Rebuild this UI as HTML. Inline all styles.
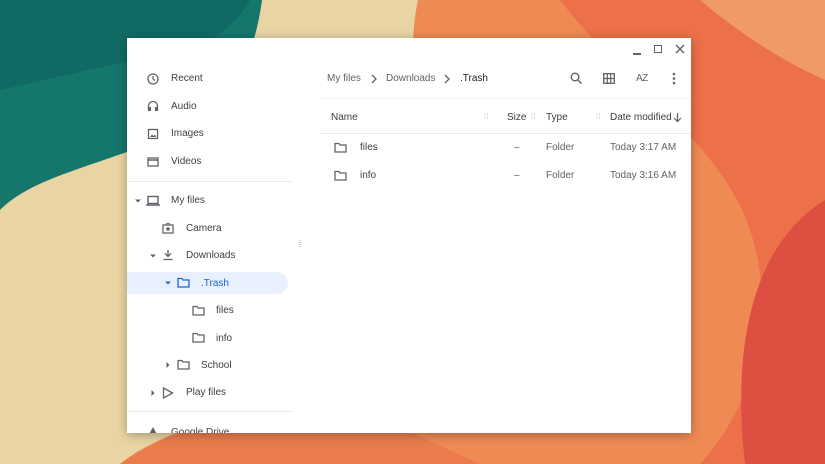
<!DOCTYPE html>
<html><head><style>
*{margin:0;padding:0;box-sizing:border-box}
body{width:825px;height:464px;overflow:hidden;position:relative;font-family:"Liberation Sans",Arial,sans-serif;background:#ef8a55}
.bg{position:absolute;left:0;top:0}
.win{position:absolute;left:127px;top:38px;width:564px;height:395px;background:#fff;box-shadow:0 2px 10px rgba(0,0,0,.3);overflow:hidden}
.t{position:absolute;font-size:10px;color:#3c4043;white-space:nowrap}
.ic{position:absolute}
.sep{position:absolute;height:1px;background:#e8eaed}
</style></head><body>
<svg class="bg" width="825" height="464">
<rect width="825" height="464" fill="#ef8a55"/>
<path d="M0 0H418C405 60 420 120 440 180C460 250 420 320 330 370C250 410 160 430 120 464H0Z" fill="#e9d4a4"/>
<path d="M0 0H262C255 50 240 100 160 140C80 170 30 180 0 210Z" fill="#15766c"/>
<path d="M0 0H250C240 20 220 35 200 45L0 90Z" fill="#106a63"/>
<path d="M120 464C170 430 250 405 330 395L480 464Z" fill="#ea7c4c"/>
<path d="M560 0H825V464H700C750 410 780 320 750 230C720 140 620 80 560 0Z" fill="#ec7048"/>
<path d="M825 200C760 240 730 330 745 464H825Z" fill="#dd4f40"/>
<path d="M700 0H825V80C780 60 735 30 700 0Z" fill="#f09a66"/>
</svg>
<div class="win">
<div class="ic" style="left:506px;top:15px;width:8px;height:1.5px;background:#5f6368"></div>
<div class="ic" style="left:527px;top:7px;width:8px;height:8px;border:1.5px solid #5f6368"></div>
<svg class="ic" style="left:548px;top:6px" width="10" height="10"><path d="M1 1L9 9M9 1L1 9" stroke="#5f6368" stroke-width="1.4"/></svg>

<svg class="ic" style="left:20px;top:35px" width="12" height="12"><circle cx="6" cy="6" r="5" fill="none" stroke="#5f6368" stroke-width="1.3"/><path d="M6 3V6L8 7.5" fill="none" stroke="#5f6368" stroke-width="1.2"/></svg>
<div class="t" style="left:44px;top:35px">Recent</div>
<svg class="ic" style="left:20px;top:62px" width="12" height="12"><path d="M1.5 10V6A4.5 4.5 0 0 1 10.5 6V10" fill="none" stroke="#5f6368" stroke-width="1.3"/><rect x="1" y="7" width="3" height="4" fill="#5f6368"/><rect x="8" y="7" width="3" height="4" fill="#5f6368"/></svg>
<div class="t" style="left:44px;top:63px">Audio</div>
<svg class="ic" style="left:20px;top:90px" width="12" height="12"><rect x="1.5" y="1.5" width="9" height="9" fill="none" stroke="#5f6368" stroke-width="1.3"/><path d="M3 9L5 6.5L6.5 8L8 6.5L9 9Z" fill="#5f6368"/></svg>
<div class="t" style="left:44px;top:90px">Images</div>
<svg class="ic" style="left:20px;top:118px" width="12" height="12"><rect x="1" y="2" width="10" height="8" fill="none" stroke="#5f6368" stroke-width="1.3"/><path d="M1 4H11" stroke="#5f6368" stroke-width="1.5"/></svg>
<div class="t" style="left:44px;top:118px">Videos</div>
<div class="sep" style="left:0;top:143px;width:165px"></div>
<svg class="ic" style="left:8px;top:160px" width="6" height="6"><path d="M0 1.5H6L3 4.5Z" fill="#5f6368"/></svg>
<svg class="ic" style="left:19px;top:157px" width="14" height="12"><rect x="2" y="1.5" width="10" height="7" fill="none" stroke="#5f6368" stroke-width="1.4"/><path d="M0 10H14" stroke="#5f6368" stroke-width="1.5"/></svg>
<div class="t" style="left:44px;top:157px">My files</div>
<svg class="ic" style="left:35px;top:184px" width="12" height="12"><rect x="1" y="3" width="10" height="8" fill="none" stroke="#5f6368" stroke-width="1.3"/><path d="M4 3L5 1.5H7L8 3" fill="none" stroke="#5f6368"/><circle cx="6" cy="7" r="1.8" fill="#5f6368"/></svg>
<div class="t" style="left:59px;top:185px">Camera</div>
<svg class="ic" style="left:23px;top:215px" width="6" height="6"><path d="M0 1.5H6L3 4.5Z" fill="#5f6368"/></svg>
<svg class="ic" style="left:35px;top:211px" width="12" height="12"><path d="M6 1V7M3 4.5L6 7.5L9 4.5M1.5 10.5H10.5" fill="none" stroke="#5f6368" stroke-width="1.3"/></svg>
<div class="t" style="left:59px;top:212px">Downloads</div>
<div class="ic" style="left:0;top:234px;width:161px;height:22px;background:#e8f0fe;border-radius:0 11px 11px 0"></div>
<svg class="ic" style="left:38px;top:242px" width="6" height="6"><path d="M0 1.5H6L3 4.5Z" fill="#1967d2"/></svg>
<svg class="ic" style="left:50px;top:239px" width="13" height="11"><path d="M1 1.5H5L6 3H12V10H1Z" fill="none" stroke="#1967d2" stroke-width="1.3"/></svg>
<div class="t" style="left:74px;top:240px;color:#1967d2">.Trash</div>
<svg class="ic" style="left:65px;top:267px" width="13" height="11"><path d="M1 1.5H5L6 3H12V10H1Z" fill="none" stroke="#5f6368" stroke-width="1.3"/></svg>
<div class="t" style="left:89px;top:267px">files</div>
<svg class="ic" style="left:65px;top:294px" width="13" height="11"><path d="M1 1.5H5L6 3H12V10H1Z" fill="none" stroke="#5f6368" stroke-width="1.3"/></svg>
<div class="t" style="left:89px;top:295px">info</div>
<svg class="ic" style="left:38px;top:324px" width="6" height="6"><path d="M1.5 0V6L4.5 3Z" fill="#5f6368"/></svg>
<svg class="ic" style="left:50px;top:321px" width="13" height="11"><path d="M1 1.5H5L6 3H12V10H1Z" fill="none" stroke="#5f6368" stroke-width="1.3"/></svg>
<div class="t" style="left:74px;top:322px">School</div>
<svg class="ic" style="left:23px;top:352px" width="6" height="6"><path d="M1.5 0V6L4.5 3Z" fill="#5f6368"/></svg>
<svg class="ic" style="left:35px;top:349px" width="12" height="12"><path d="M1.5 1L10.5 6L1.5 11Z" fill="none" stroke="#5f6368" stroke-width="1.3"/></svg>
<div class="t" style="left:59px;top:349px">Play files</div>
<div class="sep" style="left:0;top:373px;width:165px"></div>
<svg class="ic" style="left:20px;top:388px" width="12" height="12"><path d="M6 1L11 10H1Z" fill="#5f6368"/></svg>
<div class="t" style="left:44px;top:389px">Google Drive</div>
<div class="t" style="left:171px;top:201px;color:#bdc1c6;font-size:9px;letter-spacing:-1px">⁞⁞</div>

<div class="t" style="left:200px;top:35px;color:#5f6368">My files</div>
<svg class="ic" style="left:243px;top:36px" width="8" height="10"><path d="M2 1L6 5L2 9" fill="none" stroke="#5f6368" stroke-width="1.3"/></svg>
<div class="t" style="left:259px;top:35px;color:#5f6368">Downloads</div>
<svg class="ic" style="left:316px;top:36px" width="8" height="10"><path d="M2 1L6 5L2 9" fill="none" stroke="#5f6368" stroke-width="1.3"/></svg>
<div class="t" style="left:333px;top:35px;color:#202124">.Trash</div>
<svg class="ic" style="left:443px;top:34px" width="12" height="12"><circle cx="5" cy="5" r="3.8" fill="none" stroke="#5f6368" stroke-width="1.4"/><path d="M8 8L11.5 11.5" stroke="#5f6368" stroke-width="1.5"/></svg>
<svg class="ic" style="left:476px;top:35px" width="12" height="11"><rect x="0.7" y="0.7" width="10.6" height="9.6" fill="none" stroke="#5f6368" stroke-width="1.3"/><path d="M4.3 0.7V10.3M7.7 0.7V10.3M0.7 5.5H11.3" stroke="#5f6368" stroke-width="1.2"/></svg>
<div class="t" style="left:509px;top:35px;color:#5f6368;font-size:10px;letter-spacing:-0.5px">AZ</div>
<svg class="ic" style="left:545px;top:34px" width="4" height="13"><circle cx="2" cy="2" r="1.3" fill="#5f6368"/><circle cx="2" cy="6.5" r="1.3" fill="#5f6368"/><circle cx="2" cy="11" r="1.3" fill="#5f6368"/></svg>
<div class="sep" style="left:193px;top:60px;width:371px;background:#f1f3f4"></div>

<div class="t" style="left:204px;top:74px">Name</div>
<div class="t" style="left:357px;top:74px;color:#bdc1c6;font-size:8px">⁞⁞</div>
<div class="t" style="left:380px;top:74px">Size</div>
<div class="t" style="left:404px;top:74px;color:#bdc1c6;font-size:8px">⁞⁞</div>
<div class="t" style="left:419px;top:74px">Type</div>
<div class="t" style="left:469px;top:74px;color:#bdc1c6;font-size:8px">⁞⁞</div>
<div class="t" style="left:483px;top:74px">Date modified</div>
<svg class="ic" style="left:546px;top:74px" width="9" height="11"><path d="M4.5 1V9.5M1 6L4.5 9.5L8 6" fill="none" stroke="#5f6368" stroke-width="1.2"/></svg>
<div class="sep" style="left:193px;top:95px;width:371px"></div>
<svg class="ic" style="left:207px;top:104px" width="13" height="11"><path d="M1 1.5H5L6 3H12V10H1Z" fill="none" stroke="#5f6368" stroke-width="1.3"/></svg>
<div class="t" style="left:233px;top:104px">files</div>
<div class="t" style="left:387px;top:104px;color:#5f6368">–</div>
<div class="t" style="left:419px;top:104px;color:#5f6368">Folder</div>
<div class="t" style="left:483px;top:104px;color:#5f6368">Today 3:17 AM</div>
<svg class="ic" style="left:207px;top:132px" width="13" height="11"><path d="M1 1.5H5L6 3H12V10H1Z" fill="none" stroke="#5f6368" stroke-width="1.3"/></svg>
<div class="t" style="left:233px;top:132px">info</div>
<div class="t" style="left:387px;top:132px;color:#5f6368">–</div>
<div class="t" style="left:419px;top:132px;color:#5f6368">Folder</div>
<div class="t" style="left:483px;top:132px;color:#5f6368">Today 3:16 AM</div>
</div>
</body></html>
